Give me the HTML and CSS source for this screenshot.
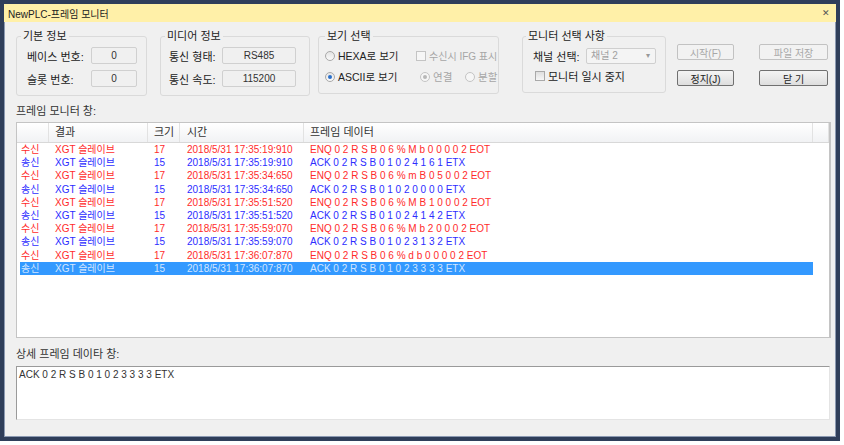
FILE: index.html
```html
<!DOCTYPE html>
<html lang="ko">
<head>
    <meta charset="UTF-8">
    <title>NewPLC-프레임 모니터</title>
    <link rel="stylesheet" href="styles.css">
</head>
<body>
    <div class="window">
        <div class="titlebar">
            <span class="title">NewPLC-프레임 모니터</span>
            <span class="close">✕</span>
        </div>

        <div class="content">
            <div class="top-row">
                <!-- 기본 정보 -->
                <fieldset class="group group-base">
                    <legend>기본 정보</legend>
                    <div class="field">
                        <span class="label">베이스 번호:</span>
                        <span class="textbox">0</span>
                    </div>
                    <div class="field">
                        <span class="label">슬롯 번호:</span>
                        <span class="textbox">0</span>
                    </div>
                </fieldset>

                <!-- 미디어 정보 -->
                <fieldset class="group group-media">
                    <legend>미디어 정보</legend>
                    <div class="field">
                        <span class="label">통신 형태:</span>
                        <span class="textbox">RS485</span>
                    </div>
                    <div class="field">
                        <span class="label">통신 속도:</span>
                        <span class="textbox">115200</span>
                    </div>
                </fieldset>

                <!-- 보기 선택 -->
                <fieldset class="group group-view">
                    <legend>보기 선택</legend>
                    <div class="option-row row-hexa">
                        <span class="option"><span class="radio"></span>HEXA로 보기</span>
                        <span class="option disabled"><span class="check"></span>수신시 IFG 표시</span>
                    </div>
                    <div class="option-row row-ascii">
                        <span class="option"><span class="radio on"></span>ASCII로 보기</span>
                        <span class="option disabled"><span class="radio on"></span>연결</span>
                        <span class="option disabled"><span class="radio"></span>분할</span>
                    </div>
                </fieldset>

                <!-- 모니터 선택 사항 -->
                <fieldset class="group group-monitor">
                    <legend>모니터 선택 사항</legend>
                    <div class="field">
                        <span class="label">채널 선택:</span>
                        <span class="combo">채널 2<span class="arrow">▾</span></span>
                    </div>
                    <div class="option-row row-pause">
                        <span class="option"><span class="check"></span>모니터 일시 중지</span>
                    </div>
                </fieldset>

                <div class="buttons">
                    <button class="btn" disabled>시작(F)</button>
                    <button class="btn" disabled>파일 저장</button>
                    <button class="btn">정지(J)</button>
                    <button class="btn">닫 기</button>
                </div>
            </div>

            <div class="section-label">프레임 모니터 창:</div>
            <div class="list">
                <div class="list-head">
                    <span></span>
                    <span>결과</span>
                    <span>크기</span>
                    <span>시간</span>
                    <span>프레임 데이터</span>
                    <span></span>
                </div>
                <div class="list-body">
                    <div class="row rx"><span>수신</span><span>XGT 슬레이브</span><span>17</span><span>2018/5/31 17:35:19:910</span><span>ENQ 0 2 R S B 0 6 % M b 0 0 0 0 2 EOT</span></div>
                    <div class="row tx"><span>송신</span><span>XGT 슬레이브</span><span>15</span><span>2018/5/31 17:35:19:910</span><span>ACK 0 2 R S B 0 1 0 2 4 1 6 1 ETX</span></div>
                    <div class="row rx"><span>수신</span><span>XGT 슬레이브</span><span>17</span><span>2018/5/31 17:35:34:650</span><span>ENQ 0 2 R S B 0 6 % m B 0 5 0 0 2 EOT</span></div>
                    <div class="row tx"><span>송신</span><span>XGT 슬레이브</span><span>15</span><span>2018/5/31 17:35:34:650</span><span>ACK 0 2 R S B 0 1 0 2 0 0 0 0 ETX</span></div>
                    <div class="row rx"><span>수신</span><span>XGT 슬레이브</span><span>17</span><span>2018/5/31 17:35:51:520</span><span>ENQ 0 2 R S B 0 6 % M B 1 0 0 0 2 EOT</span></div>
                    <div class="row tx"><span>송신</span><span>XGT 슬레이브</span><span>15</span><span>2018/5/31 17:35:51:520</span><span>ACK 0 2 R S B 0 1 0 2 4 1 4 2 ETX</span></div>
                    <div class="row rx"><span>수신</span><span>XGT 슬레이브</span><span>17</span><span>2018/5/31 17:35:59:070</span><span>ENQ 0 2 R S B 0 6 % M b 2 0 0 0 2 EOT</span></div>
                    <div class="row tx"><span>송신</span><span>XGT 슬레이브</span><span>15</span><span>2018/5/31 17:35:59:070</span><span>ACK 0 2 R S B 0 1 0 2 3 1 3 2 ETX</span></div>
                    <div class="row rx"><span>수신</span><span>XGT 슬레이브</span><span>17</span><span>2018/5/31 17:36:07:870</span><span>ENQ 0 2 R S B 0 6 % d b 0 0 0 0 2 EOT</span></div>
                    <div class="row tx selected"><span>송신</span><span>XGT 슬레이브</span><span>15</span><span>2018/5/31 17:36:07:870</span><span>ACK 0 2 R S B 0 1 0 2 3 3 3 3 ETX</span></div>
                </div>
            </div>

            <div class="section-label detail-label">상세 프레임 데이타 창:</div>
            <div class="detail">ACK 0 2 R S B 0 1 0 2 3 3 3 3 ETX</div>
        </div>
    </div>
</body>
</html>
```

FILE: styles.css
```css
body {
    margin: 0;
    padding: 0;
    background-color: #ffffff;
    font-family: "Liberation Sans", "Noto Sans CJK KR", sans-serif;
    font-size: 11px;
    color: #222;
}

.window {
    width: 840px;
    height: 441px;
    box-sizing: border-box;
    border: 4px solid #2f3e5a;
    box-shadow: inset 0 0 0 1px #8c9ab2;
    background-color: #f0f0f0;
    display: flex;
    flex-direction: column;
}

.titlebar {
    height: 18px;
    display: flex;
    align-items: center;
    justify-content: space-between;
    padding: 0 6px 0 4px;
    background-color: #fff0a8;
    font-size: 10px;
    color: #222;
}

.close {
    font-size: 9px;
    color: #555;
}

.content {
    padding: 0 6px 0 12px;
}

/* top group boxes */
.top-row {
    display: flex;
    align-items: flex-start;
    margin-top: 8px;
}

.group {
    box-sizing: border-box;
    margin: 0;
    min-width: 0;
    border: 1px solid #dadada;
    border-radius: 3px;
    padding: 4px 0 8px 10px;
    white-space: nowrap;
}

.group legend {
    padding: 0 2px;
    line-height: 13px;
    color: #222;
}

.group-base {
    width: 131px;
}

.group-base legend {
    margin-left: -6px;
}

.group-media {
    width: 150px;
    margin-left: 13px;
    padding-left: 8px;
}

.group-media legend {
    margin-left: -4px;
}

.group-view {
    width: 181px;
    margin-left: 8px;
    padding-left: 6px;
}

.group-monitor {
    width: 144px;
    margin-left: 23px;
    padding-left: 10px;
}

.group-monitor legend {
    margin-left: -7px;
}

.field {
    display: flex;
    align-items: center;
    height: 17px;
}

.field + .field {
    margin-top: 6px;
}

.label {
    flex: none;
}

.group-base .label {
    width: 64px;
}

.group-media .label,
.group-monitor .label {
    width: 53px;
}

.textbox {
    box-sizing: border-box;
    height: 17px;
    line-height: 15px;
    border: 1px solid #d0d0d0;
    border-radius: 2px;
    background-color: #f0f0f0;
    text-align: center;
    font-size: 10px;
    color: #333;
}

.group-base .textbox {
    width: 46px;
}

.group-media .textbox {
    width: 74px;
}

.combo {
    box-sizing: border-box;
    width: 70px;
    height: 16px;
    line-height: 14px;
    border: 1px solid #cfcfcf;
    border-radius: 2px;
    background-color: #f4f4f4;
    color: #a0a0a0;
    font-size: 10px;
    padding-left: 4px;
    display: flex;
    justify-content: space-between;
}

.combo .arrow {
    font-size: 8px;
    padding-right: 5px;
    color: #999;
}

.option-row {
    display: flex;
    align-items: center;
    height: 17px;
}

.group-view .option-row {
    font-size: 10.5px;
}

.row-hexa .option.disabled {
    font-size: 10px;
}

.row-ascii {
    margin-top: 4px;
}

.row-pause {
    margin-top: 3px;
    padding-left: 2px;
}

.option {
    display: flex;
    align-items: center;
    flex: none;
}

.option.disabled {
    color: #a6a6a6;
}

.row-hexa .option:first-child {
    width: 91px;
}

.row-ascii .option:nth-child(1) {
    width: 95px;
}

.row-ascii .option:nth-child(2) {
    width: 45px;
}

.radio {
    position: relative;
    box-sizing: border-box;
    flex: none;
    width: 10px;
    height: 10px;
    border: 1px solid #a9a9a9;
    border-radius: 50%;
    background: linear-gradient(#e4e4e4, #fafafa);
    margin-right: 3px;
}

.radio.on::after {
    content: "";
    position: absolute;
    left: 2px;
    top: 2px;
    width: 4px;
    height: 4px;
    border-radius: 50%;
    background-color: #2a6fc9;
}

.disabled .radio {
    border-color: #c4c4c4;
    background: #f6f6f6;
}

.disabled .radio.on::after {
    background-color: #b8b8b8;
}

.check {
    box-sizing: border-box;
    flex: none;
    width: 10px;
    height: 10px;
    border: 1px solid #a9a9a9;
    background: linear-gradient(#dedede, #f6f6f6);
    margin-right: 3px;
}

.disabled .check {
    border-color: #c4c4c4;
    background: #f6f6f6;
}

/* command buttons */
.buttons {
    display: grid;
    grid-template-columns: 57px 69px;
    column-gap: 25px;
    row-gap: 10px;
    margin: 14px 0 0 11px;
}

.btn {
    height: 16px;
    padding: 0;
    border: 1px solid #707070;
    border-radius: 2px;
    background: linear-gradient(#f4f4f4, #dedede);
    font-family: "Liberation Sans", "Noto Sans CJK KR", sans-serif;
    font-size: 10px;
    color: #222;
}

.btn:disabled {
    border-color: #c2c2c2;
    background: #f2f2f2;
    color: #a8a8a8;
}

/* frame monitor list */
.section-label {
    line-height: 13px;
    margin-top: 9px;
    color: #333;
}

.list {
    box-sizing: border-box;
    width: 815px;
    height: 216px;
    margin-top: 4px;
    border: 1px solid #c4c4c4;
    border-right-width: 2px;
    background-color: #ffffff;
}

.list-head {
    display: grid;
    grid-template-columns: 32px 99px 32px 124px 509px 16px;
    height: 19px;
    border-bottom: 1px solid #d8d8d8;
    background: linear-gradient(#ffffff, #f1f2f4);
    color: #333;
}

.list-head span {
    line-height: 19px;
    padding-left: 6px;
    border-right: 1px solid #e2e2e2;
}

.list-head span:nth-child(4) {
    padding-left: 7px;
}

.list-body {
    padding-left: 3px;
}

.row {
    display: grid;
    grid-template-columns: 29px 99px 32px 124px 509px;
    width: 793px;
    height: 13.2px;
    line-height: 13px;
    font-size: 10px;
    white-space: nowrap;
}

.row span {
    padding-left: 6px;
}

.row span:first-child {
    padding-left: 1px;
}

.row span:nth-child(4) {
    padding-left: 7px;
}

.row.rx {
    color: #ff2b2b;
}

.row.tx {
    color: #2d2dff;
}

.row.selected {
    background-color: #3399ff;
    color: #d2e6ff;
}

/* detail window */
.detail-label {
    margin-top: 10px;
}

.detail {
    box-sizing: border-box;
    width: 814px;
    height: 54px;
    margin-top: 5px;
    padding: 1px 2px;
    border-top: 1px solid #9a9a9a;
    border-left: 1px solid #9a9a9a;
    border-right: 1px solid #e4e4e4;
    border-bottom: 1px solid #e4e4e4;
    background-color: #ffffff;
    font-size: 10px;
    line-height: 13px;
    color: #333;
}
```
